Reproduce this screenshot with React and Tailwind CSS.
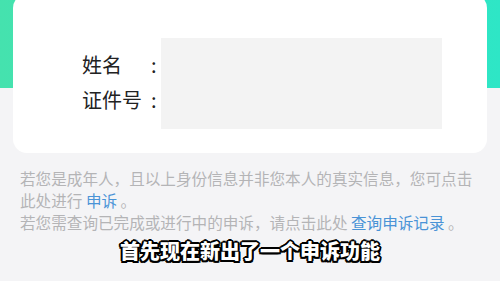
import React from 'react';

// Real-name info card with appeal hints, plus a video subtitle overlay.
const cjk = "font-['Noto_Sans_CJK_SC','Noto_Sans',sans-serif]";

const App = () => {
  return (
    <div className={`w-[500px] h-[281px] overflow-hidden bg-[#f4f4f6] ${cjk}`}>
      <div className="h-[88px] bg-gradient-to-r from-[#45e2ae] to-[#2ee6c6]" />
      <div className="mx-[13px] -mt-[94px] h-[159px] rounded-[14px] bg-white relative flex items-start pl-[69px] pt-[44px]">
        <div className="flex flex-col justify-center h-[87px] text-[20px] leading-[35px] text-[#222]">
          <div className="flex">
            <span className="w-[69px]">姓名</span>
            <span>:</span>
          </div>
          <div className="flex">
            <span className="w-[69px]">证件号</span>
            <span>:</span>
          </div>
        </div>
        <div className="ml-[4px] w-[281px] h-[91px] bg-[#f3f3f3]" />
      </div>

      <div className="pl-[20px] pr-[14px] mt-[14px] text-[15.6px] leading-[22px] text-[#b4b4b6]">
        <p>
          若您是成年人，且以上身份信息并非您本人的真实信息，您可点击此处进行 <span className="text-[#4a93d6]">申诉</span> 。
        </p>
        <p>
          若您需查询已完成或进行中的申诉，请点击此处 <span className="text-[#4a93d6]">查询申诉记录</span> 。
        </p>
      </div>

      <div className="mt-[4px] text-center text-[20px] leading-[28px] font-black text-white [text-shadow:2px_0_0_#000,-2px_0_0_#000,0_2px_0_#000,0_-2px_0_#000,1.5px_1.5px_0_#000,-1.5px_-1.5px_0_#000,1.5px_-1.5px_0_#000,-1.5px_1.5px_0_#000]">
        首先现在新出了一个申诉功能
      </div>
    </div>
  );
};

export default App;
